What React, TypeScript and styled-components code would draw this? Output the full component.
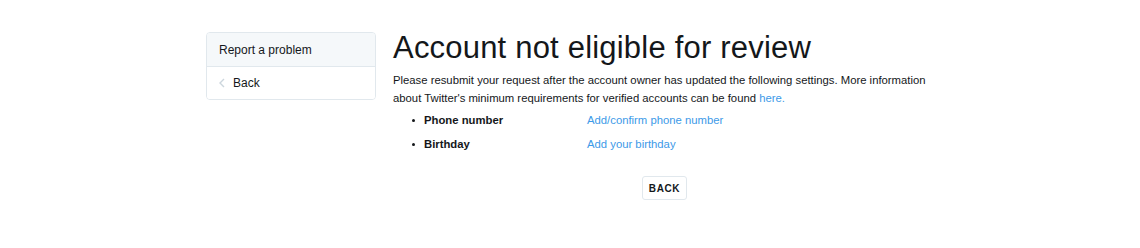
import React from 'react';
import styled, { createGlobalStyle } from 'styled-components';

const GlobalStyle = createGlobalStyle`
  html, body {
    margin: 0;
    padding: 0;
    background: #ffffff;
  }
  body {
    font-family: 'Helvetica Neue', 'Liberation Sans', Arial, sans-serif;
    color: #14171a;
  }
`;

const StyledPage = styled.div`
  width: 1140px;
  height: 248px;
  display: flex;
  align-items: flex-start;
  padding: 32px 0 0 206px;
  box-sizing: border-box;
  gap: 17px;
`;

const StyledSidebar = styled.div`
  width: 170px;
  border: 1px solid #e1e8ed;
  border-radius: 4px;
  box-sizing: border-box;
  overflow: hidden;
`;

const StyledSidebarItem = styled.div<{ active?: boolean }>`
  height: 33px;
  display: flex;
  align-items: center;
  padding: 0 12px;
  font-size: 12px;
  color: #14171a;
  background: ${({ active }) => (active ? '#f5f8fa' : '#ffffff')};
  border-top: ${({ active }) => (active ? 'none' : '1px solid #e1e8ed')};
  box-sizing: border-box;
  gap: 8px;
`;

const StyledChevron = styled.svg`
  width: 6px;
  height: 10px;
  fill: none;
  stroke: #ccd6dd;
  stroke-width: 1.4;
`;

const StyledMain = styled.div`
  width: 543px;
  display: flex;
  flex-direction: column;
`;

const StyledTitle = styled.h1`
  margin: 0;
  font-size: 31px;
  font-weight: 300;
  line-height: 32px;
  letter-spacing: 0.2px;
  color: #14171a;
`;

const StyledText = styled.p`
  margin: 7px 0 0;
  font-size: 11.3px;
  line-height: 18px;
  color: #14171a;
`;

const StyledLink = styled.a`
  color: #3d9ae8;
  text-decoration: none;
`;

const StyledList = styled.ul`
  margin: 1px 0 0;
  padding: 0 0 0 19px;
  list-style: none;
`;

const StyledListItem = styled.li`
  display: grid;
  grid-template-columns: 12px 163px auto;
  align-items: center;
  height: 24px;
  font-size: 11.3px;
`;

const StyledBullet = styled.span`
  width: 3px;
  height: 3px;
  border-radius: 50%;
  background: #14171a;
`;

const StyledLabel = styled.span`
  font-weight: bold;
`;

const StyledButtonRow = styled.div`
  display: flex;
  justify-content: center;
  margin-top: 20px;
`;

const StyledButton = styled.button`
  height: 24px;
  padding: 0 6px;
  border: 1px solid #e1e8ed;
  border-radius: 3px;
  background: #ffffff;
  font-family: inherit;
  font-size: 10px;
  font-weight: bold;
  letter-spacing: 0.6px;
  color: #14171a;
`;

const settings = [
  { label: 'Phone number', action: 'Add/confirm phone number' },
  { label: 'Birthday', action: 'Add your birthday' },
];

export default function App() {
  return (
    <>
      <GlobalStyle />
      <StyledPage>
        <StyledSidebar>
          <StyledSidebarItem active>Report a problem</StyledSidebarItem>
          <StyledSidebarItem>
            <StyledChevron viewBox="0 0 6 10">
              <path d="M5 1 L1 5 L5 9" />
            </StyledChevron>
            Back
          </StyledSidebarItem>
        </StyledSidebar>
        <StyledMain>
          <StyledTitle>Account not eligible for review</StyledTitle>
          <StyledText>
            Please resubmit your request after the account owner has updated the following settings. More information
            about Twitter's minimum requirements for verified accounts can be found <StyledLink href="#">here.</StyledLink>
          </StyledText>
          <StyledList>
            {settings.map((s) => (
              <StyledListItem key={s.label}>
                <StyledBullet />
                <StyledLabel>{s.label}</StyledLabel>
                <StyledLink href="#">{s.action}</StyledLink>
              </StyledListItem>
            ))}
          </StyledList>
          <StyledButtonRow>
            <StyledButton>BACK</StyledButton>
          </StyledButtonRow>
        </StyledMain>
      </StyledPage>
    </>
  );
}
